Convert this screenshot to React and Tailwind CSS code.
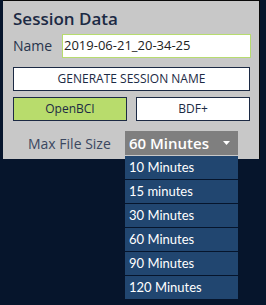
import React from "react";

const options = ["10 Minutes", "15 minutes", "30 Minutes", "60 Minutes", "90 Minutes", "120 Minutes"];

export default function App() {
  return (
    <div className="w-[266px] h-[305px] bg-[#06152c] pl-[3px] font-['Open_Sans',sans-serif] text-[#1c2a44]">
      {/* Session Data panel */}
      <div className="relative w-[257px] h-[159px] bg-[#c8c8c8] border-t border-r border-[#0a0a0a] pl-[10px] pr-[8px]">
        <h2 className="pt-[7px] text-[17px] leading-[22px] font-semibold">Session Data</h2>

        <div className="flex items-center mt-[4px] h-[24px]">
          <span className="w-[49px] text-[14px] leading-[20px] text-[#27344c]">Name</span>
          <div className="flex-1 h-[24px] bg-white border border-[#b7dc6f] px-[1px] flex items-center text-[13px] text-[#222]">
            2019-06-21_20-34-25
          </div>
        </div>

        <button className="mt-[9px] w-[237px] h-[24px] bg-white border border-[#1c2a44] text-[12px] leading-none">
          GENERATE SESSION NAME
        </button>

        <div className="mt-[6px] flex w-[237px] gap-[9px]">
          <button className="flex-1 h-[24px] bg-[#b8dc6c] border border-[#1c2a44] text-[12px] leading-none">
            OpenBCI
          </button>
          <button className="flex-1 h-[24px] bg-white border border-[#1c2a44] text-[12px] leading-none">
            BDF+
          </button>
        </div>

        <div className="mt-[10px] flex items-center">
          <span className="ml-[15px] w-[97px] text-[14px] text-[#3a475f]">Max File Size</span>
          <div className="relative">
            <div className="w-[113px] h-[24px] bg-[#7f7f7f] flex items-center justify-between px-[4px] text-white text-[15px] font-semibold">
              <span>60 Minutes</span>
              <svg width="7" height="4" viewBox="0 0 7 4" className="mr-[4px]">
                <polygon points="0,0 7,0 3.5,4" fill="#fff" />
              </svg>
            </div>
            {/* dropdown list */}
            <ul className="absolute left-0 top-[25px] w-[113px] bg-[#06152c] z-10">
              {options.map((o) => (
                <li
                  key={o}
                  className="h-[23px] mb-[1px] bg-[#214670] text-white text-[13px] flex items-center px-[4px] font-['Lato',sans-serif]"
                >
                  {o}
                </li>
              ))}
            </ul>
          </div>
        </div>
      </div>
    </div>
  );
}
